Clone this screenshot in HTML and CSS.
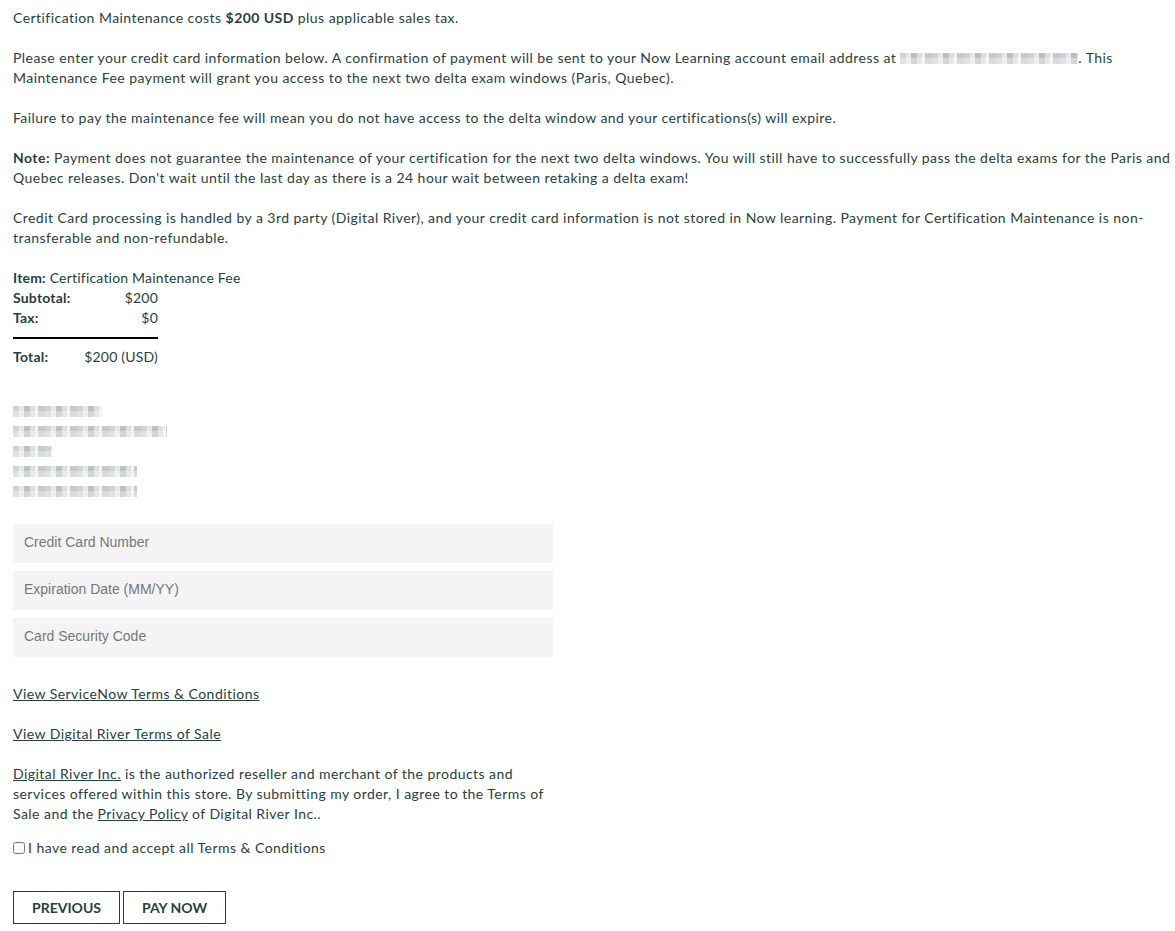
FILE: index.html
```html
<!DOCTYPE html>
<html lang="en">
<head>
    <meta charset="UTF-8">
    <meta name="viewport" content="width=device-width, initial-scale=1.0">
    <title>Certification Maintenance Payment</title>
    <link rel="stylesheet" href="styles.css">
</head>
<body>

<p>Certification Maintenance costs <b>$200 USD</b> plus applicable sales tax.</p>

<p>Please enter your credit card information below. A confirmation of payment will be sent to your Now Learning account email address at <span class="blur blur-email"></span>. This Maintenance Fee payment will grant you access to the next two delta exam windows (Paris, Quebec).</p>

<p>Failure to pay the maintenance fee will mean you do not have access to the delta window and your certifications(s) will expire.</p>

<p><b>Note:</b> Payment does not guarantee the maintenance of your certification for the next two delta windows. You will still have to successfully pass the delta exams for the Paris and Quebec releases. Don't wait until the last day as there is a 24 hour wait between retaking a delta exam!</p>

<p>Credit Card processing is handled by a 3rd party (Digital River), and your credit card information is not stored in Now learning. Payment for Certification Maintenance is non-transferable and non-refundable.</p>

<!-- Order summary -->
<div class="summary">
    <div><b>Item:</b> Certification Maintenance Fee</div>
    <div class="row"><b>Subtotal:</b><span>$200</span></div>
    <div class="row"><b>Tax:</b><span>$0</span></div>
    <div class="rule"></div>
    <div class="row"><b>Total:</b><span>$200 (USD)</span></div>
</div>

<!-- Billing address (hidden) -->
<div class="address">
    <div class="line"><span class="blur" style="width: 89px;"></span></div>
    <div class="line"><span class="blur" style="width: 154px;"></span></div>
    <div class="line"><span class="blur" style="width: 39px;"></span></div>
    <div class="line"><span class="blur" style="width: 124px;"></span></div>
    <div class="line"><span class="blur" style="width: 124px;"></span></div>
</div>

<!-- Card fields -->
<div class="card-form">
    <input type="text" placeholder="Credit Card Number">
    <input type="text" placeholder="Expiration Date (MM/YY)">
    <input type="text" placeholder="Card Security Code">
</div>

<p><a href="#">View ServiceNow Terms &amp; Conditions</a></p>
<p><a href="#">View Digital River Terms of Sale</a></p>

<p class="reseller"><a href="#">Digital River Inc.</a> is the authorized reseller and merchant of the products and services offered within this store. By submitting my order, I agree to the Terms of Sale and the <a href="#">Privacy Policy</a> of Digital River Inc..</p>

<label class="accept"><input type="checkbox">I have read and accept all Terms &amp; Conditions</label>

<div class="buttons">
    <button>PREVIOUS</button>
    <button>PAY NOW</button>
</div>

</body>
</html>
```

FILE: styles.css
```css
body { font-family: Lato, "Liberation Sans", sans-serif; font-size: 14px; line-height: 20px; letter-spacing: 0.45px; color: #293e40; margin: 0; padding: 8px 0 8px 13px; }
p { margin: 0 0 20px; }
b { font-weight: 700; }
a { color: #293e40; text-decoration: underline; }

.blur { display: inline-block; height: 11px; vertical-align: -1px; background:
    repeating-linear-gradient(180deg, rgba(255,255,255,0) 0 5px, rgba(255,255,255,0.35) 5px 11px),
    repeating-linear-gradient(90deg, #cfd3d3 0 6px, #e6e8e8 6px 11px, #bcc1c1 11px 17px, #dcdfdf 17px 22px, #f0f1f1 22px 25px, #c6caca 25px 32px); }
.blur-email { width: 178px; }

.summary { width: 145px; white-space: nowrap; letter-spacing: 0.2px; }
.row { display: flex; justify-content: space-between; }
.rule { height: 2px; background: #000; margin: 9px 0 8px; }

.address { margin-top: 34px; }
.address .line { height: 20px; }

.card-form { margin-top: 23px; margin-bottom: 27px; }
.card-form input { display: block; width: 540px; height: 39px; box-sizing: border-box; margin-bottom: 8px; padding: 0 11px 3px; border: none; background: #f4f4f4; font-family: "Liberation Sans", Arial, sans-serif; font-size: 14px; letter-spacing: 0; color: #333; }
.card-form input::placeholder { color: #777; }

.reseller { width: 545px; margin-bottom: 14px; }

.accept { display: flex; align-items: center; }
.accept input { margin: 0 3px 0 0; width: 12px; height: 12px; }

.buttons { display: flex; gap: 3px; margin-top: 33px; }
button { height: 33px; padding: 0 18px; background: #fff; border: 1px solid #293e40; color: #293e40; font-family: Lato, "Liberation Sans", sans-serif; font-size: 14px; font-weight: 700; letter-spacing: 0; cursor: pointer; }
```
